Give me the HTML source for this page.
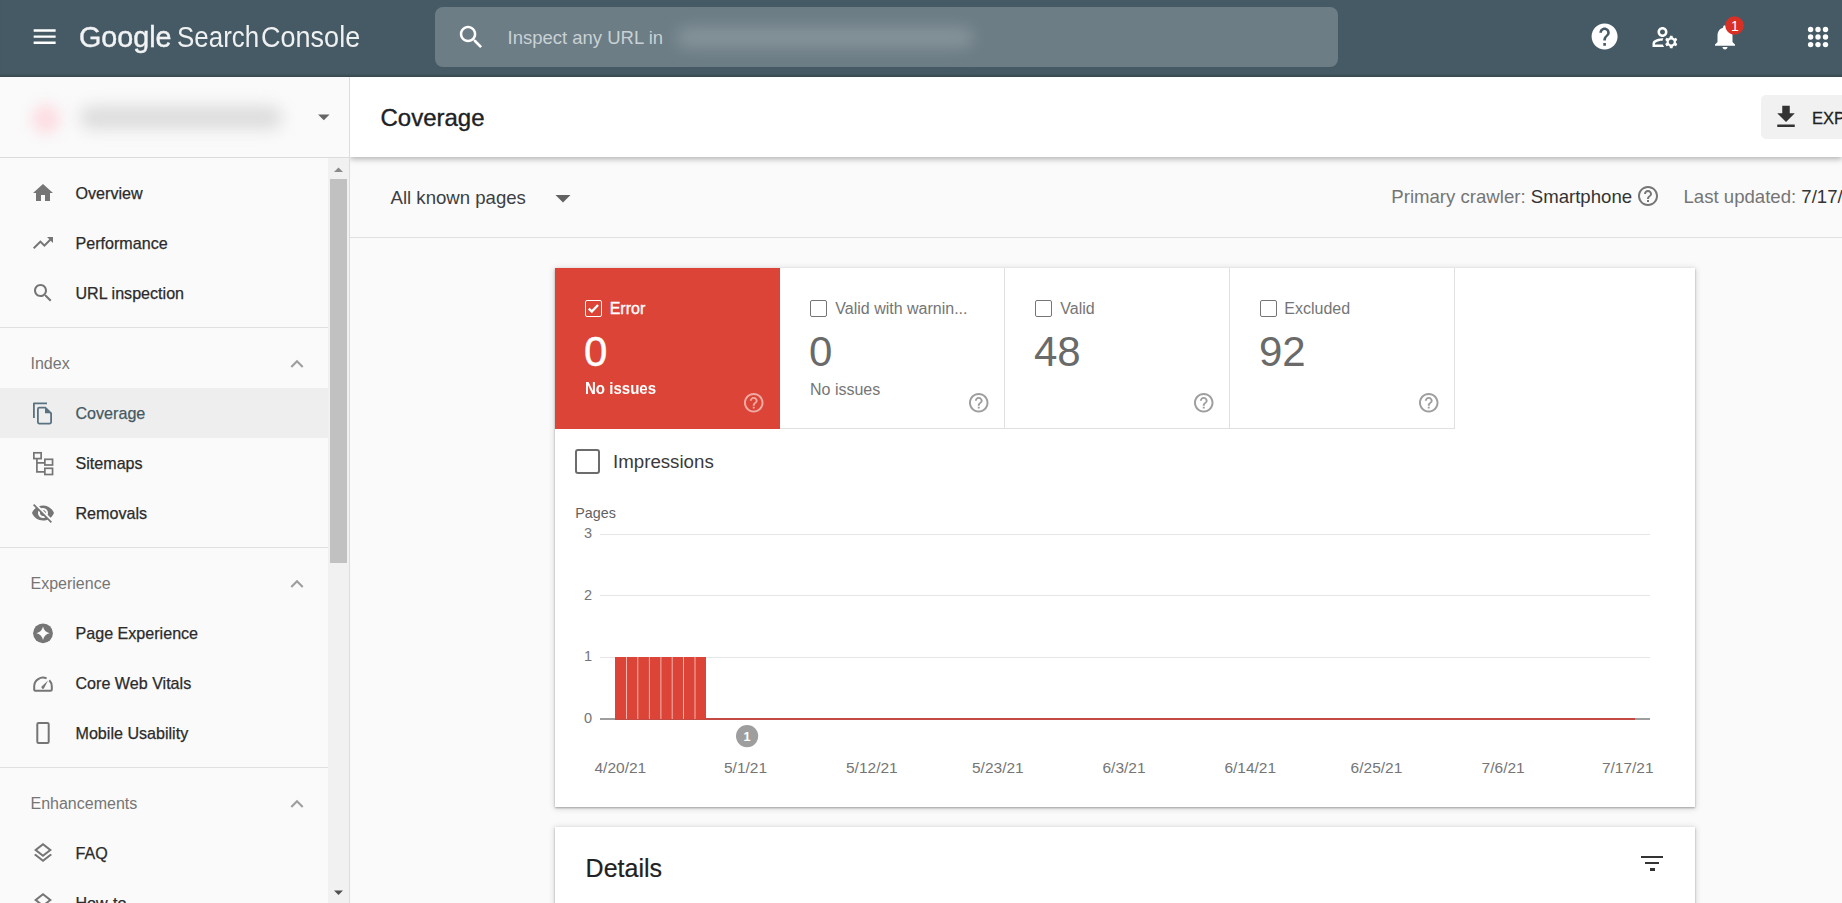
<!DOCTYPE html>
<html><head><meta charset="utf-8">
<style>
*{box-sizing:border-box;margin:0;padding:0}
html,body{width:1842px;height:903px;overflow:hidden;background:#fafafa;font-family:"Liberation Sans",sans-serif;position:relative}
.a{position:absolute;white-space:nowrap;line-height:1}
svg{position:absolute;overflow:visible}
#hdr{position:absolute;left:0;top:0;width:1842px;height:77px;background:#455a64;box-shadow:inset 0 -3px 2px -1px rgba(0,0,0,.18)}
#search{position:absolute;left:435px;top:7px;width:903px;height:60px;border-radius:8px;background:#6c7d85}
#side{position:absolute;left:0;top:77px;width:350px;height:826px;background:#fafafa;border-right:1px solid #dcdcdc}
.nav{font-size:16.1px;color:#2b2b2b;-webkit-text-stroke:0.25px currentColor}
.sec{font-size:16px;color:#757575;margin-top:1px}
.div{position:absolute;left:0;width:328px;height:1px;background:#e0e0e0}
#title{position:absolute;left:350px;top:77px;width:1492px;height:80px;background:#fff;box-shadow:0 2px 6px rgba(0,0,0,.3);z-index:2;clip-path:inset(0 0 -12px 0)}
#filt{position:absolute;left:350px;top:157px;width:1492px;height:81px;background:#fafafa;border-bottom:1px solid #e0e0e0}
.card{position:absolute;background:#fff;box-shadow:0 1px 2px rgba(0,0,0,.3),0 1px 6px 1px rgba(0,0,0,.13)}
.tile{position:absolute;top:0;width:225px;height:161px;border-right:1px solid #e0e0e0;border-bottom:1px solid #e0e0e0}
.cb{position:absolute;width:17px;height:17px;border:1.5px solid #757575;border-radius:2px}
.tl{font-size:16px;color:#757575}
.big{font-size:42px;color:#6a6a6a}
.xl{font-size:15.5px;color:#757575}
.yl{font-size:14.5px;color:#757575}
.grid{position:absolute;left:600px;width:1050px;height:1px;background:#e6e6e6}
</style></head><body>

<!-- HEADER -->
<div id="hdr"></div>
<svg style="left:30.3px;top:22px" width="29.3" height="29.3" viewBox="0 0 24 24"><path fill="#fff" d="M3 18h18v-2H3v2zm0-5h18v-2H3v2zm0-7v2h18V6H3z"/></svg>
<div class="a" style="left:78.5px;top:23px;font-size:29px;color:#f1f3f4;-webkit-text-stroke:0.4px #f1f3f4;transform-origin:0 0;transform:scaleX(0.99)">Google</div><div class="a" style="left:176.5px;top:23px;font-size:29px;color:#eef0f1;transform-origin:0 0;transform:scaleX(0.894)">Search</div><div class="a" style="left:260.5px;top:23px;font-size:29px;color:#eef0f1;transform-origin:0 0;transform:scaleX(0.932)">Console</div>
<div id="search"></div>
<svg style="left:455.9px;top:21.9px" width="30.5" height="30.5" viewBox="0 0 24 24"><path fill="#fff" d="M15.5 14h-.79l-.28-.27C15.41 12.59 16 11.11 16 9.5 16 5.91 13.09 3 9.5 3S3 5.91 3 9.5 5.91 16 9.5 16c1.61 0 3.09-.59 4.23-1.57l.27.28v.79l5 4.99L20.49 19l-4.99-5zm-6 0C7.010 14 5 11.99 5 9.5S7.01 5 9.5 5 14 7.01 14 9.5 11.99 14 9.5 14z"/></svg>
<div class="a" style="left:507.5px;top:28.8px;font-size:18.5px;color:#c9d1d5">Inspect any URL in</div>
<div class="a" style="left:676px;top:27px;width:298px;height:21px;border-radius:10px;background:#86939a;filter:blur(8px)"></div>

<svg style="left:1589.4px;top:21.4px" width="31.2" height="31.2" viewBox="0 0 24 24"><path fill="#fff" d="M12 2C6.48 2 2 6.48 2 12s4.48 10 10 10 10-4.48 10-10S17.52 2 12 2zm1 17h-2v-2h2v2zm2.07-7.75l-.9.92C13.45 12.9 13 13.5 13 15h-2v-.5c0-1.1.45-2.1 1.17-2.830l1.24-1.26c.37-.36.59-.86.59-1.41 0-1.1-.9-2-2-2s-2 .9-2 2H8c0-2.21 1.79-4 4-4s4 1.790 4 4c0 .88-.36 1.68-.93 2.25z"/></svg>
<svg style="left:1649.5px;top:22px" width="30" height="30" viewBox="0 0 24 24"><path fill="#fff" d="M4 18v-.65c0-.34.16-.66.41-.81C6.1 15.53 8.03 15 10 15c.03 0 .05 0 .08.01.1-.7.3-1.37.59-1.98-.22-.02-.44-.03-.67-.03-2.42 0-4.68.67-6.61 1.82-.88.52-1.390 1.5-1.39 2.53V20h9.26c-.42-.6-.75-1.28-.97-2H4zM10 12c2.21 0 4-1.79 4-4s-1.79-4-4-4-4 1.79-4 4 1.79 4 4 4zm0-6c1.1 0 2 .9 2 2s-.9 2-2 2-2-.9-2-2 .9-2 2-2zM20.75 16c0-.22-.03-.42-.06-.63l1.14-1.01-1-1.73-1.45.49c-.32-.27-.68-.48-1.08-.63L18 11h-2l-.3 1.49c-.4.15-.76.36-1.08.63l-1.45-.49-1 1.73 1.14 1.01c-.03.21-.06.41-.06.63s.03.42.06.63l-1.14 1.01 1 1.73 1.45-.49c.32.27.68.48 1.08.63L16 21h2l.3-1.49c.4-.15.76-.36 1.08-.63l1.45.49 1-1.73-1.14-1.01c.03-.21.06-.41.06-.63zM17 18c-1.1 0-2-.9-2-2s.9-2 2-2 2 .9 2 2-.9 2-2 2z"/></svg>
<svg style="left:1710px;top:22.2px" width="30" height="30" viewBox="0 0 24 24"><path fill="#fff" d="M12 22c1.1 0 2-.9 2-2h-4c0 1.1.89 2 2 2zm6-6v-5c0-3.07-1.64-5.64-4.5-6.32V4c0-.83-.67-1.5-1.5-1.5s-1.5.67-1.5 1.5v.68C7.63 5.36 6 7.92 6 11v5l-2 2v1h16v-1l-2-2z"/></svg>
<svg style="left:1725px;top:16px" width="19" height="19" viewBox="0 0 19 19"><circle cx="9.5" cy="9.5" r="9.3" fill="#d93025"/><text x="9.8" y="14.6" text-anchor="middle" font-family="Liberation Sans" font-size="14" fill="#fff">1</text></svg>
<svg style="left:1800px;top:22px" width="34" height="30" viewBox="0 0 34 30"><g fill="#fff"><circle cx="10.6" cy="7.5" r="2.7"/><circle cx="18" cy="7.5" r="2.7"/><circle cx="25.5" cy="7.5" r="2.7"/><circle cx="10.6" cy="15" r="2.7"/><circle cx="18" cy="15" r="2.7"/><circle cx="25.5" cy="15" r="2.7"/><circle cx="10.6" cy="22.6" r="2.7"/><circle cx="18" cy="22.6" r="2.7"/><circle cx="25.5" cy="22.6" r="2.7"/></g></svg>

<!-- SIDEBAR -->
<div id="side"></div>
<div class="a" style="left:32px;top:104px;width:28px;height:30px;border-radius:50%;background:#fcdde2;filter:blur(7px)"></div>
<div class="a" style="left:80px;top:106px;width:202px;height:23px;border-radius:11px;background:#dcdcdc;filter:blur(8px)"></div>
<svg style="left:310.4px;top:102.6px" width="27.6" height="27.6" viewBox="0 0 24 24"><path fill="#666" d="M7 10l5 5 5-5z"/></svg>
<div class="a" style="left:0;top:157px;width:349px;height:1px;background:#dcdcdc"></div>

<!-- nav rows -->
<svg style="left:30.5px;top:181.1px" width="24" height="24" viewBox="0 0 24 24"><path fill="#757575" d="M10 20v-6h4v6h5v-8h3L12 3 2 12h3v8z"/></svg>
<div class="a nav" style="left:75.5px;top:184.9px">Overview</div>
<svg style="left:30.5px;top:231.1px" width="24" height="24" viewBox="0 0 24 24"><path fill="#757575" d="M16 6l2.29 2.29-4.88 4.88-4-4L2 16.59 3.41 18l6-6 4 4 6.3-6.29L22 12V6z"/></svg>
<div class="a nav" style="left:75.5px;top:234.9px">Performance</div>
<svg style="left:30.5px;top:281.1px" width="24" height="24" viewBox="0 0 24 24"><path fill="#757575" d="M15.5 14h-.79l-.28-.27C15.41 12.59 16 11.11 16 9.5 16 5.91 13.09 3 9.5 3S3 5.91 3 9.5 5.91 16 9.5 16c1.61 0 3.09-.59 4.23-1.57l.27.28v.79l5 4.99L20.49 19l-4.99-5zm-6 0C7.01 14 5 11.99 5 9.5S7.01 5 9.5 5 14 7.01 14 9.5 11.99 14 9.5 14z"/></svg>
<div class="a nav" style="left:75.5px;top:284.9px">URL inspection</div>
<div class="div" style="top:327px"></div>

<div class="a sec" style="left:30.5px;top:355.4px">Index</div>
<svg style="left:283.5px;top:350.5px" width="26" height="26" viewBox="0 0 24 24"><path fill="#9e9e9e" d="M12 8l-6 6 1.41 1.41L12 10.83l4.59 4.58L18 14z"/></svg>
<div class="a" style="left:0;top:388px;width:328px;height:50px;background:#eeeeee"></div>
<svg style="left:30.5px;top:401.1px" width="24" height="24" viewBox="0 0 24 24"><g fill="none" stroke="#587280" stroke-width="1.8" stroke-linejoin="round"><path d="M2.9 17V2.4H16"/><path d="M8.4 6.65H14.3L20.1 12.3V21.1A1.5 1.5 0 0 1 18.6 22.6H8.4A1.5 1.5 0 0 1 6.9 21.1V8.15A1.5 1.5 0 0 1 8.4 6.65z"/></g><path fill="#587280" d="M14 6l6.8 6.2H14z"/></svg>
<div class="a nav" style="left:75.5px;top:404.9px;color:#455a64">Coverage</div>
<svg style="left:30.5px;top:451.1px" width="24" height="24" viewBox="0 0 24 24"><g fill="none" stroke="#757575" stroke-width="1.7"><rect x="2.85" y="1.8" width="7.3" height="5.8"/><rect x="13.85" y="8.3" width="7.7" height="5.7"/><rect x="13.85" y="17.3" width="7.7" height="6.2"/><path d="M5.9 7.6V20.9h8M5.9 11.9h8"/></g></svg>
<div class="a nav" style="left:75.5px;top:454.9px">Sitemaps</div>
<svg style="left:30.5px;top:501.1px" width="24" height="24" viewBox="0 0 24 24"><path fill="#757575" d="M12 7c2.76 0 5 2.24 5 5 0 .65-.13 1.26-.36 1.83l2.92 2.92c1.51-1.26 2.7-2.89 3.43-4.75-1.73-4.39-6-7.5-11-7.5-1.4 0-2.74.25-3.980.7l2.16 2.16C10.74 7.13 11.35 7 12 7zM2 4.27l2.28 2.28.46.46C3.08 8.3 1.78 10.02 1 12c1.73 4.39 6 7.5 11 7.5 1.55 0 3.03-.3 4.38-.84l.42.42L19.73 22 21 20.73 3.27 3 2 4.27zM7.53 9.8l1.55 1.55c-.05.21-.08.43-.08.65 0 1.66 1.34 3 3 3 .22 0 .44-.03.65-.08l1.55 1.55c-.67.33-1.41.53-2.2.53-2.76 0-5-2.24-5-5 0-.79.2-1.530.53-2.2zm4.31-.78l3.15 3.15.02-.16c0-1.66-1.34-3-3-3l-.17.01z"/></svg>
<div class="a nav" style="left:75.5px;top:504.9px">Removals</div>
<div class="div" style="top:547px"></div>

<div class="a sec" style="left:30.5px;top:575.4px">Experience</div>
<svg style="left:283.5px;top:570.5px" width="26" height="26" viewBox="0 0 24 24"><path fill="#9e9e9e" d="M12 8l-6 6 1.41 1.41L12 10.83l4.59 4.58L18 14z"/></svg>
<svg style="left:30.5px;top:621.0px" width="24" height="24" viewBox="0 0 24 24"><circle cx="12" cy="12.3" r="9.9" fill="#757575"/><path fill="#fafafa" d="M12 5.6Q13.2 11.1 18.7 12.3 13.2 13.5 12 19 10.8 13.5 5.3 12.3 10.8 11.1 12 5.6z"/></svg>
<div class="a nav" style="left:75.5px;top:624.9px">Page Experience</div>
<svg style="left:30.5px;top:671.0px" width="24" height="24" viewBox="0 0 24 24"><path fill="none" stroke="#757575" stroke-width="2" d="M3.2 19.8V15.5A8.8 8.8 0 0 1 15.6 7.4M18.3 9.2A8.8 8.8 0 0 1 20.8 15.5V18.3A1.5 1.5 0 0 1 19.3 19.8H3.2"/><path fill="#757575" d="M10.7 15.6L17 9.6 13 17.2a1.3 1.3 0 0 1-2.3-1.6z"/></svg>
<div class="a nav" style="left:75.5px;top:674.9px">Core Web Vitals</div>
<svg style="left:30.5px;top:721.0px" width="24" height="24" viewBox="0 0 24 24"><rect x="6.3" y="2" width="11.4" height="20" rx="1.3" fill="none" stroke="#757575" stroke-width="2"/></svg>
<div class="a nav" style="left:75.5px;top:724.9px">Mobile Usability</div>
<div class="div" style="top:767px"></div>

<div class="a sec" style="left:30.5px;top:795.4px">Enhancements</div>
<svg style="left:283.5px;top:790.5px" width="26" height="26" viewBox="0 0 24 24"><path fill="#9e9e9e" d="M12 8l-6 6 1.41 1.41L12 10.83l4.59 4.58L18 14z"/></svg>
<svg style="left:30.5px;top:841.0px" width="24" height="24" viewBox="0 0 24 24"><path fill="#757575" d="M11.99 18.54l-7.37-5.73L3 14.07l9 7 9-7-1.63-1.27-7.38 5.74zM12 16l7.36-5.73L21 9l-9-7-9 7 1.63 1.27L12 16zm0-11.47L17.74 9 12 13.47 6.26 9 12 4.53z"/></svg>
<div class="a nav" style="left:75.5px;top:844.9px">FAQ</div>
<svg style="left:30.5px;top:891.0px" width="24" height="24" viewBox="0 0 24 24"><path fill="#757575" d="M11.99 18.54l-7.37-5.73L3 14.07l9 7 9-7-1.63-1.27-7.38 5.74zM12 16l7.36-5.73L21 9l-9-7-9 7 1.63 1.27L12 16zm0-11.47L17.74 9 12 13.47 6.26 9 12 4.53z"/></svg>
<div class="a nav" style="left:75.5px;top:894.9px">How-to</div>

<!-- scrollbar -->
<div class="a" style="left:328px;top:158px;width:21px;height:745px;background:#f1f1f1"></div>
<div class="a" style="left:330px;top:179px;width:17px;height:384px;background:#c1c1c1"></div>
<svg style="left:328px;top:158px" width="21" height="21" viewBox="0 0 21 21"><path fill="#8a8a8a" d="M10.5 9.6l4.5 4.4h-9z"/></svg>
<svg style="left:328px;top:882px" width="21" height="21" viewBox="0 0 21 21"><path fill="#505050" d="M10.5 13l4.5-4.4h-9z"/></svg>

<!-- TITLE BAR -->
<div id="title"></div>
<div class="a" style="z-index:3;left:380.5px;top:106.2px;font-size:24px;color:#202124;-webkit-text-stroke:0.35px #202124">Coverage</div>
<div class="a" style="z-index:3;left:1761px;top:95px;width:100px;height:44px;border-radius:5px;background:#f1f1f1"></div>
<svg style="z-index:3;left:1771px;top:102.1px" width="30" height="30" viewBox="0 0 24 24"><path fill="#333" d="M19 9h-4V3H9v6H5l7 7 7-7zM5 18v2h14v-2H5z"/></svg>
<div class="a" style="z-index:3;left:1812px;top:110.4px;font-size:16.5px;color:#222;-webkit-text-stroke:0.3px #222">EXPORT</div>

<!-- FILTER ROW -->
<div id="filt"></div>
<div class="a" style="left:390.5px;top:189.3px;font-size:18.6px;color:#3c4043">All known pages</div>
<svg style="left:544.5px;top:179.8px" width="36" height="36" viewBox="0 0 24 24"><path fill="#616161" d="M7 10l5 5 5-5z"/></svg>
<div class="a" style="left:1391.3px;top:187.9px;font-size:18.6px;color:#757575">Primary crawler: <span style="color:#333">Smartphone</span></div>
<svg style="left:1636px;top:184.3px" width="24" height="24" viewBox="0 0 24 24"><path fill="#757575" d="M11 18h2v-2h-2v2zm1-16C6.48 2 2 6.48 2 12s4.48 10 10 10 10-4.48 10-10S17.52 2 12 2zm0 18c-4.41 0-8-3.59-8-8s3.59-8 8-8 8 3.59 8 8-3.59 8-8 8zm0-14c-2.21 0-4 1.79-4 4h2c0-1.1.9-2 2-2s2 .9 2 2c0 2-3 1.75-3 5h2c0-2.25 3-2.5 3-5 0-2.21-1.79-4-4-4z"/></svg>
<div class="a" style="left:1683.5px;top:187.9px;font-size:18.6px;color:#757575">Last updated: <span style="color:#333">7/17/21</span></div>

<!-- CARD -->
<div class="card" style="left:555px;top:268px;width:1140px;height:539px"></div>
<div class="a" style="left:555px;top:268px;width:225px;height:161px;background:#db4437"></div>
<div class="tile" style="left:780px;top:268px;border-left:0"></div>
<div class="tile" style="left:1005px;top:268px"></div>
<div class="tile" style="left:1230px;top:268px"></div>

<!-- tile 1 -->
<div class="cb" style="left:585px;top:300px;border-color:#fff"></div>
<svg style="left:585px;top:300px" width="17" height="17" viewBox="0 0 17 17"><path fill="none" stroke="#fff" stroke-width="2.4" d="M3.8 8.6l3 3 6.2-6.6"/></svg>
<div class="a" style="left:609.7px;top:300.8px;font-size:16px;color:#fff;-webkit-text-stroke:0.35px #fff">Error</div>
<div class="a big" style="left:584px;top:330.7px;color:#fff;-webkit-text-stroke:0.5px #fff">0</div>
<div class="a" style="left:584.7px;top:381.2px;font-size:16px;color:#fff;font-weight:bold;transform-origin:0 0;transform:scaleX(.94)">No issues</div>
<svg style="left:743.7px;top:392.7px" width="19.5" height="19.5" viewBox="2 2 20 20"><path fill="rgba(255,255,255,.55)" d="M11 18h2v-2h-2v2zm1-16C6.48 2 2 6.48 2 12s4.48 10 10 10 10-4.48 10-10S17.52 2 12 2zm0 18c-4.41 0-8-3.59-8-8s3.59-8 8-8 8 3.59 8 8-3.590 8-8 8zm0-14c-2.21 0-4 1.79-4 4h2c0-1.1.9-2 2-2s2 .9 2 2c0 2-3 1.75-3 5h2c0-2.25 3-2.5 3-5 0-2.21-1.79-4-4-4z"/></svg>

<!-- tile 2 -->
<div class="cb" style="left:810px;top:300px"></div>
<div class="a tl" style="left:835.3px;top:300.8px">Valid with warnin...</div>
<div class="a big" style="left:809px;top:330.7px">0</div>
<div class="a tl" style="left:810px;top:381.7px">No issues</div>
<svg style="left:968.5px;top:392.7px" width="19.5" height="19.5" viewBox="2 2 20 20"><path fill="#9e9e9e" d="M11 18h2v-2h-2v2zm1-16C6.48 2 2 6.48 2 12s4.48 10 10 10 10-4.48 10-10S17.52 2 12 2zm0 18c-4.41 0-8-3.59-8-8s3.59-8 8-8 8 3.59 8 8-3.59 8-8 8zm0-14c-2.21 0-4 1.79-4 4h2c0-1.1.9-2 2-2s2 .9 2 2c0 2-3 1.75-3 5h2c0-2.25 3-2.5 3-5 0-2.21-1.79-4-4-4z"/></svg>

<!-- tile 3 -->
<div class="cb" style="left:1035px;top:300px"></div>
<div class="a tl" style="left:1060.3px;top:300.8px">Valid</div>
<div class="a big" style="left:1034px;top:330.7px">48</div>
<svg style="left:1193.5px;top:392.7px" width="19.5" height="19.5" viewBox="2 2 20 20"><path fill="#9e9e9e" d="M11 18h2v-2h-2v2zm1-16C6.48 2 2 6.48 2 12s4.48 10 10 10 10-4.48 10-10S17.52 2 12 2zm0 18c-4.41 0-8-3.59-8-8s3.59-8 8-8 8 3.59 8 8-3.59 8-8 8zm0-14c-2.21 0-4 1.79-4 4h2c0-1.1.9-2 2-2s2 .9 2 2c0 2-3 1.75-3 5h2c0-2.25 3-2.5 3-5 0-2.21-1.79-4-4-4z"/></svg>

<!-- tile 4 -->
<div class="cb" style="left:1260px;top:300px"></div>
<div class="a tl" style="left:1284.3px;top:300.8px">Excluded</div>
<div class="a big" style="left:1259px;top:330.7px">92</div>
<svg style="left:1418.5px;top:392.7px" width="19.5" height="19.5" viewBox="2 2 20 20"><path fill="#9e9e9e" d="M11 18h2v-2h-2v2zm1-16C6.48 2 2 6.48 2 12s4.48 10 10 10 10-4.48 10-10S17.52 2 12 2zm0 18c-4.41 0-8-3.59-8-8s3.59-8 8-8 8 3.59 8 8-3.59 8-8 8zm0-14c-2.21 0-4 1.79-4 4h2c0-1.1.9-2 2-2s2 .9 2 2c0 2-3 1.75-3 5h2c0-2.25 3-2.5 3-5 0-2.21-1.79-4-4-4z"/></svg>

<!-- impressions -->
<div class="a" style="left:575.3px;top:449.3px;width:24.3px;height:24.3px;border:2.5px solid #6c6c6c;border-radius:3px"></div>
<div class="a" style="left:613px;top:453.1px;font-size:18.7px;color:#3a3a3a">Impressions</div>

<!-- chart -->
<div class="a" style="left:575.3px;top:505.6px;font-size:14.3px;color:#616161">Pages</div>
<div class="grid" style="top:534px"></div>
<div class="grid" style="top:595px"></div>
<div class="grid" style="top:656.5px"></div>
<div class="a yl" style="left:584px;top:526.3px">3</div>
<div class="a yl" style="left:584px;top:587.8px">2</div>
<div class="a yl" style="left:584px;top:649.3px">1</div>
<div class="a yl" style="left:584px;top:710.8px">0</div>
<div class="a" style="left:600px;top:717.5px;width:1050px;height:2px;background:#9e9e9e"></div>
<div class="a" style="left:615px;top:717.5px;width:1020px;height:2px;background:#c24a42"></div>
<div class="a" style="left:615.2px;top:657px;width:91px;height:62.4px;background:#db4437"></div>
<svg style="left:600px;top:650px" width="120" height="80" viewBox="600 650 120 80"><g stroke="#f4b4ae" stroke-width="1"><path d="M626.5 657V719M637.8 657V719M649.4 657V719M660.9 657V719M672.2 657V719M683.5 657V719M695 657V719"/></g></svg>
<svg style="left:735.8px;top:725.2px" width="22.2" height="22.2" viewBox="0 0 22 22"><circle cx="11" cy="11" r="11" fill="#9e9e9e"/><text x="11" y="15.6" text-anchor="middle" font-family="Liberation Sans" font-weight="bold" font-size="12.5" fill="#fff">1</text></svg>

<div class="a xl" style="left:594.5px;top:759.9px">4/20/21</div>
<div class="a xl" style="left:724px;top:759.9px">5/1/21</div>
<div class="a xl" style="left:846px;top:759.9px">5/12/21</div>
<div class="a xl" style="left:972px;top:759.9px">5/23/21</div>
<div class="a xl" style="left:1102.5px;top:759.9px">6/3/21</div>
<div class="a xl" style="left:1224.4px;top:759.9px">6/14/21</div>
<div class="a xl" style="left:1350.6px;top:759.9px">6/25/21</div>
<div class="a xl" style="left:1481.6px;top:759.9px">7/6/21</div>
<div class="a xl" style="left:1601.9px;top:759.9px">7/17/21</div>

<!-- DETAILS CARD -->
<div class="card" style="left:555px;top:827px;width:1140px;height:200px"></div>
<div class="a" style="left:585.6px;top:855.8px;font-size:25px;color:#212121;-webkit-text-stroke:0.2px #212121">Details</div>
<div class="a" style="left:1641px;top:855.5px;width:22.2px;height:2.5px;background:#333"></div>
<div class="a" style="left:1644.7px;top:861.8px;width:14.8px;height:2.5px;background:#333"></div>
<div class="a" style="left:1649.5px;top:868.2px;width:5.1px;height:2.5px;background:#333"></div>

</body></html>
